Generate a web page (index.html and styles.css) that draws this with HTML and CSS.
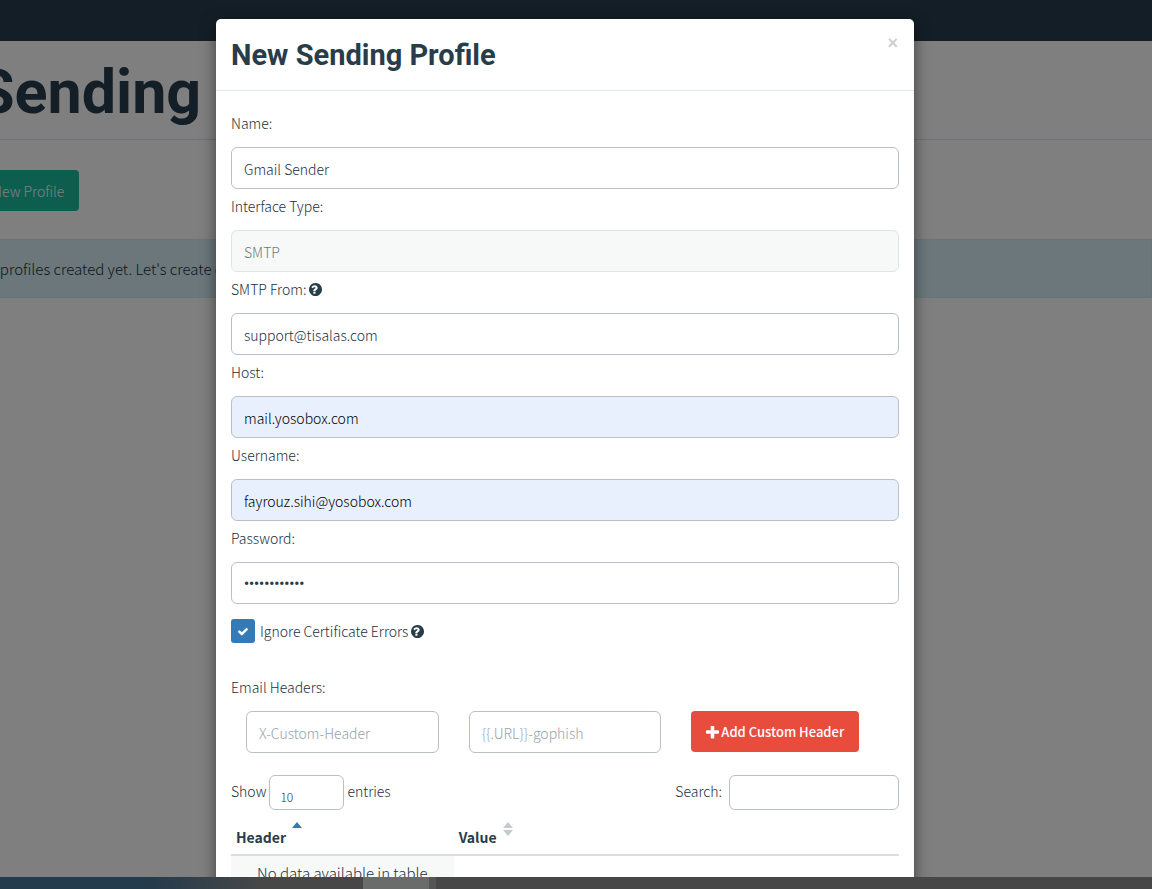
FILE: index.html
```html
<!doctype html>
<html lang="en">
<head>
    <meta charset="UTF-8">
    <meta name="viewport" content="width=device-width, initial-scale=1.0">
    <title>New Sending Profile</title>
    <link rel="stylesheet" href="styles.css">
</head>
<body>
<svg class="sprite" aria-hidden="true">
    <symbol id="i-help" viewBox="128 128 1536 1536"><path d="M896 1376v-192q0-14-9-23t-23-9h-192q-14 0-23 9t-9 23v192q0 14 9 23t23 9h192q14 0 23-9t9-23zm256-672q0-88-55.500-163t-138.500-116-170-41q-243 0-371 213-15 24 8 42l132 100q7 6 19 6 16 0 25-12 53-68 86-92 34-24 86-24 48 0 85.500 26t37.500 59q0 38-20 61t-68 45q-63 28-115.500 86.500t-52.500 125.500v36q0 14 9 23t23 9h192q14 0 23-9t9-23q0-19 21.500-49.500t54.500-49.500q32-18 49-28.500t46-35 44.500-48 28-60.500 12.500-81zm512 192q0 209-103 385.500t-279.500 279.500-385.500 103-385.500-103-279.500-279.500-103-385.500 103-385.500 279.500-279.500 385.500-103 385.500 103 279.500 279.500 103 385.500z"/></symbol>
    <symbol id="i-plus" viewBox="192 192 1408 1408"><path d="M1600 736v192q0 40-28 68t-68 28h-416v416q0 40-28 68t-68 28h-192q-40 0-68-28t-28-68v-416h-416q-40 0-68-28t-28-68v-192q0-40 28-68t68-28h416v-416q0-40 28-68t68-28h192q40 0 68 28t28 68v416h416q40 0 68 28t28 68z"/></symbol>
    <symbol id="i-check" viewBox="121 250 1550 1292"><path d="M1671 566q0 40-28 68l-724 724-136 136q-28 28-68 28t-68-28l-136-136-362-362q-28-28-28-68t28-68l136-136q28-28 68-28t68 28l294 295 656-657q28-28 68-28t68 28l136 136q28 28 28 68z"/></symbol>
</svg>

<div class="screen">
    <div class="page">
        <div class="navbar"></div>
        <div class="main">
            <h1>Sending Profiles</h1>
            <button type="button" class="btn btn-new"><svg class="icon"><use href="#i-plus"/></svg> New Profile</button>
            <div class="alert">No profiles created yet. Let's create one!</div>
        </div>
        <div class="backdrop"></div>

        <div class="modal-wrap">
            <div class="modal" role="dialog" aria-labelledby="modalTitle">
                <div class="modal-header">
                    <h2 id="modalTitle">New Sending Profile</h2>
                    <button type="button" class="close" aria-label="Close">×</button>
                </div>
                <form class="modal-body">
                    <label for="name">Name:</label>
                    <input type="text" class="control" id="name" value="Gmail Sender">
                    <label for="interface">Interface Type:</label>
                    <input type="text" class="control" id="interface" value="SMTP" disabled>
                    <label for="from">SMTP From: <svg class="icon help"><use href="#i-help"/></svg></label>
                    <input type="text" class="control" id="from" value="support@tisalas.com">
                    <label for="host">Host:</label>
                    <input type="text" class="control filled" id="host" value="mail.yosobox.com">
                    <label for="username">Username:</label>
                    <input type="text" class="control filled" id="username" value="fayrouz.sihi@yosobox.com">
                    <label for="password">Password:</label>
                    <input type="password" class="control" id="password" value="abcdefghijkl">

                    <div class="check-row">
                        <span class="check-box">
                            <input type="checkbox" id="ignore" checked>
                            <svg class="check-icon"><use href="#i-check"/></svg>
                        </span>
                        <label for="ignore">Ignore Certificate Errors <svg class="icon help"><use href="#i-help"/></svg></label>
                    </div>

                    <label for="headerKey">Email Headers:</label>
                    <div class="headers">
                        <input type="text" class="control" id="headerKey" placeholder="X-Custom-Header">
                        <input type="text" class="control" aria-label="Header value" placeholder="{{.URL}}-gophish">
                        <button type="button" class="btn btn-add"><svg class="icon"><use href="#i-plus"/></svg>Add Custom Header</button>
                    </div>

                    <div class="table-tools">
                        <label class="length">Show
                            <select class="control small">
                                <option>10</option>
                                <option>25</option>
                                <option>50</option>
                            </select>
                            entries</label>
                        <label class="search">Search:
                            <input type="search" class="control small">
                        </label>
                    </div>

                    <table>
                        <thead>
                        <tr>
                            <th>Header <svg class="sort" viewBox="0 0 10 14"><path class="on" d="M0 6L5 0L10 6z"/></svg></th>
                            <th>Value <svg class="sort" viewBox="0 0 10 14"><path d="M0 6L5 0L10 6zM0 8H10L5 14z"/></svg></th>
                            <th></th>
                        </tr>
                        </thead>
                        <tbody>
                        <tr>
                            <td class="empty">No data available in table</td>
                        </tr>
                        </tbody>
                    </table>
                </form>
            </div>
        </div>
    </div>
    <div class="taskbar"><span class="task"></span></div>
</div>
</body>
</html>
```
FILE: styles.css
```css
*{
    box-sizing: border-box;
}

body{
    margin: 0;
    font-family: "Noto Sans CJK SC", "Noto Sans", sans-serif;
    font-size: 14px;
    line-height: 21px;
    font-weight: 300;
    color: #1c303e;
}

input, select, button{
    font-family: inherit;
    font-size: 14px;
    font-weight: 300;
}

.sprite{
    display: none;
}

.icon{
    width: 13px;
    height: 13px;
    fill: currentColor;
    vertical-align: -2px;
}

.help{
    margin-left: -1px;
    vertical-align: -1px;
    color: #283c4a;
}

.screen{
    display: flex;
    flex-direction: column;
    height: 100vh;
    overflow: hidden;
}

.page{
    position: relative;
    flex: 1;
    min-height: 0;
    overflow: hidden;
}

/* page behind the dialog */
.navbar{
    height: 41px;
    background: #283c4e;
}

.main{
    margin-left: -39px;
}

.main h1{
    margin: 0 0 30px;
    padding: 16px 16px 11px;
    border-bottom: 1px solid #dce4ec;
    font-family: Roboto, sans-serif;
    font-size: 61px;
    line-height: 71px;
    font-weight: 700;
    color: #283c4e;
}

.btn{
    height: 41px;
    padding: 0 15px;
    border: 0;
    border-radius: 4px;
    color: #fff;
    white-space: nowrap;
}

.btn-new{
    display: block;
    background: #1abc9c;
}

.alert{
    margin-top: 28px;
    padding: 18px 15px;
    border: 1px solid #cfeaf0;
    background: #d6eef6;
    font-size: 15px;
}

.backdrop{
    position: absolute;
    inset: 0;
    background: rgba(0, 0, 0, .5);
}

/* dialog */
.modal-wrap{
    position: absolute;
    inset: 0;
    padding: 19px 22px 0 0;
}

.modal{
    max-width: 698px;
    min-height: 100%;
    margin: 0 auto;
    background: #fff;
    border-radius: 5px;
    box-shadow: 0 5px 15px rgba(0, 0, 0, .5);
}

.modal-header{
    display: flex;
    justify-content: space-between;
    align-items: flex-start;
    padding: 16px 16px 14px 15px;
    border-bottom: 1px solid #e0e5e5;
}

.modal-header h2{
    margin: 0;
    font-family: Roboto, sans-serif;
    font-size: 29px;
    line-height: 41px;
    font-weight: 700;
    color: #283c4a;
}

.close{
    padding: 0;
    border: 0;
    background: none;
    font-family: "Liberation Sans", sans-serif;
    font-size: 18px;
    line-height: 16px;
    font-weight: 700;
    color: #ccd0d2;
}

.modal-body{
    padding: 15px;
}

.modal-body label{
    display: block;
    margin: 7px 0 13px;
}

.control{
    display: block;
    width: 100%;
    height: 42px;
    padding: 1px 12px 0;
    border: 1px solid #b9c0ca;
    border-radius: 6px;
    outline: 0;
    background: #fff;
    color: #1c303e;
}

.control::placeholder{
    color: #98a2ac;
}

.control:disabled{
    border-color: #dfe5e5;
    background: #f7f9f9;
    color: #6c7983;
}

.filled{
    background: #e8f0fe;
    color: #000;
}

.control[type=password]{
    padding-top: 2px;
    font-family: Roboto, sans-serif;
    font-weight: 700;
    color: #283c4a;
}

.check-row{
    display: flex;
    gap: 5px;
    align-items: center;
    margin: 15px 0 34px;
}

.modal-body .check-row label{
    margin: 0;
}

.check-box{
    display: grid;
    place-items: center;
}

.check-box > *{
    grid-area: 1 / 1;
}

.check-box input{
    appearance: none;
    width: 24px;
    height: 24px;
    margin: 0;
    border-radius: 3px;
    background: #337ab7;
}

.check-icon{
    width: 10px;
    height: 9px;
    fill: #fff;
    pointer-events: none;
}

.headers{
    display: grid;
    grid-template-columns: repeat(3, 1fr);
    column-gap: 30px;
    padding: 0 15px;
}

.btn-add{
    justify-self: start;
    background: #e84c3d;
    font-size: 13px;
    font-weight: 500;
}

.btn-add .icon{
    margin-right: 2px;
}

.table-tools{
    display: flex;
    justify-content: space-between;
    margin-top: 22px;
}

.modal-body .table-tools label{
    display: flex;
    margin: 0;
    line-height: 32px;
}

.modal-body .length{
    gap: 3px;
}

.modal-body .search{
    gap: 7px;
}

.small{
    height: 35px;
}

.length select{
    appearance: none;
    width: 75px;
    padding: 8px 10px 0;
    font-size: 12px;
}

.search input{
    width: 170px;
}

table{
    width: 100%;
    margin-top: 10px;
    border-collapse: collapse;
    table-layout: fixed;
}

th{
    padding: 7px 5px 6px;
    border-bottom: 2px solid #ddd;
    text-align: left;
    font-weight: 700;
    color: #283c4a;
}

.sort{
    width: 10px;
    height: 14px;
    margin: -5px 0 0 3px;
    vertical-align: top;
    fill: #c4cacd;
}

.sort .on{
    fill: #337ab7;
}

.empty{
    padding: 6px 5px;
    background: #f7f9f9;
    text-align: center;
    font-size: 15px;
}

/* strip of the desktop under the page */
.taskbar{
    display: flex;
    height: 12px;
    padding-left: 363px;
    background: linear-gradient(90deg, #243b4d 150px, #474747 260px);
}

.task{
    width: 73px;
    border-right: 7px solid #555;
    background: #6a6c6b;
}
```
